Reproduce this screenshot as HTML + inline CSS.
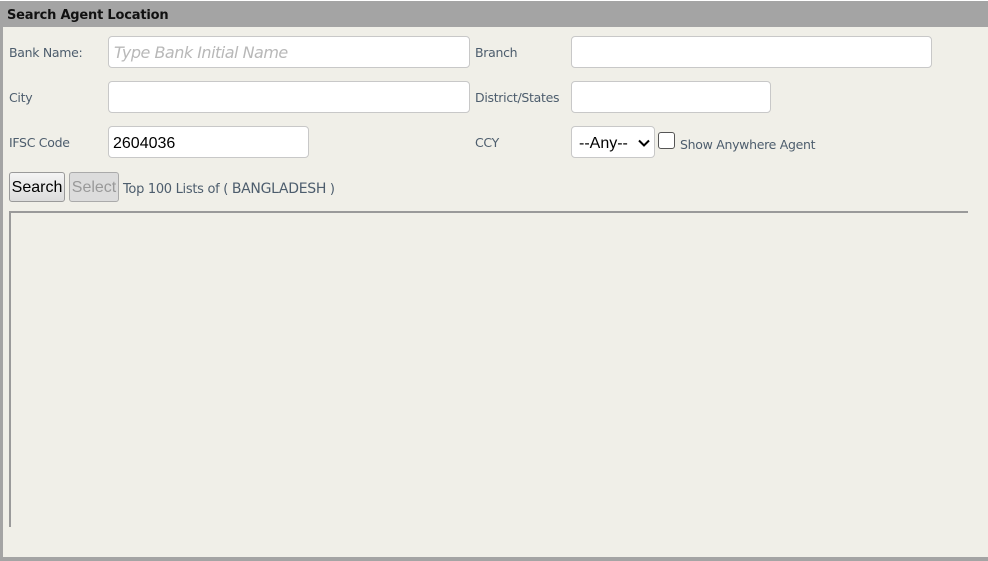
<!DOCTYPE html>
<html><head><style>
*{box-sizing:border-box;margin:0;padding:0}
body{width:988px;height:561px;background:#fff;position:relative;overflow:hidden;font-family:"DejaVu Sans","Liberation Sans",sans-serif}
#frame{position:absolute;left:0;top:1px;width:988px;height:560px;background:#f0efe8;border-left:3px solid #a4a4a4;border-bottom:4px solid #a4a4a4}
#hdr{position:absolute;left:0;top:1px;width:988px;height:26px;background:#a4a4a4;color:#111;font-weight:bold;font-size:13px;line-height:30px;padding-left:7px;letter-spacing:-0.2px}
.l{position:absolute;font-size:12.5px;color:#4d5d6d;letter-spacing:-0.3px}
.i{position:absolute;background:#fff;border:1px solid #c8c8c8;border-radius:4px;height:32px}
.btn{position:absolute;height:30px;border:1px solid #9a9a9a;border-radius:3px;background:linear-gradient(#f4f4f4,#dcdcdc);font-family:"Liberation Sans",sans-serif;font-size:16px;line-height:29px;text-align:center}
</style></head><body>
<div id="frame"></div>
<div id="hdr">Search Agent Location</div>
<div class="l" style="left:9px;top:45px">Bank Name:</div>
<div class="i" style="left:108px;top:36px;width:362px;font-style:italic;color:#b8b8b8;font-size:16px;line-height:32px;padding-left:5px;letter-spacing:-0.5px">Type Bank Initial Name</div>
<div class="l" style="left:475px;top:45px">Branch</div>
<div class="i" style="left:571px;top:36px;width:361px"></div>
<div class="l" style="left:9px;top:90px">City</div>
<div class="i" style="left:108px;top:81px;width:362px"></div>
<div class="l" style="left:475px;top:90px">District/States</div>
<div class="i" style="left:571px;top:81px;width:200px"></div>
<div class="l" style="left:9px;top:135px">IFSC Code</div>
<div class="i" style="left:108px;top:126px;width:201px;font-family:'Liberation Sans',sans-serif;font-size:16px;line-height:33px;padding-left:4px;color:#000">2604036</div>
<div class="l" style="left:475px;top:135px">CCY</div>
<div class="i" style="left:571px;top:126px;width:84px;font-family:'Liberation Sans',sans-serif;font-size:16px;line-height:33px;padding-left:7px;color:#000">--Any--<svg style="position:absolute;left:66px;top:12px" width="12" height="8" viewBox="0 0 12 8"><path d="M1 1.5L6 6.5L11 1.5" stroke="#000" stroke-width="2" fill="none"/></svg></div>
<div style="position:absolute;left:658px;top:132px;width:17px;height:17px;border:1.5px solid #555;border-radius:3px;background:#fff"></div>
<div class="l" style="left:680px;top:137px">Show Anywhere Agent</div>
<div class="btn" style="left:9px;top:172px;width:56px;color:#000">Search</div>
<div class="btn" style="left:69px;top:172px;width:50px;color:#999;background:#dcdcdc;border-color:#aaa">Select</div>
<div class="l" style="left:123px;top:181px;font-size:13px">Top 100 Lists of ( <span style="font-size:14px">BANGLADESH</span> )</div>
<div style="position:absolute;left:9px;top:211px;width:959px;height:2px;background:#9a9a9a"></div>
<div style="position:absolute;left:9px;top:211px;width:2px;height:316px;background:#9a9a9a"></div>
</body></html>
